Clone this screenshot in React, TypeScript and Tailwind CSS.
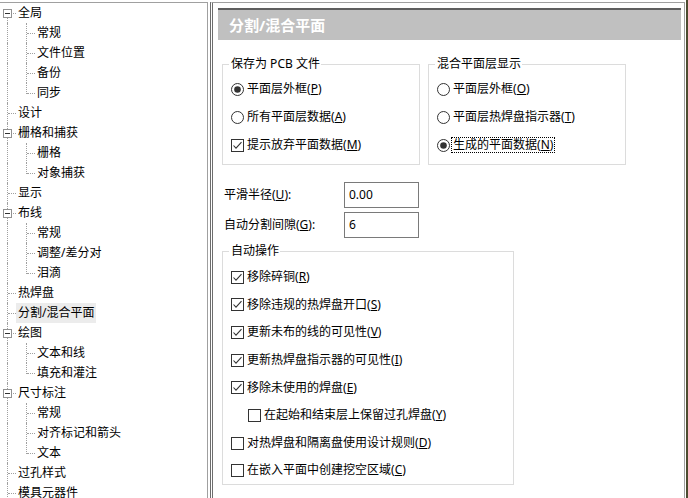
import React from 'react';

type TreeItem = { t: string; l: 0 | 1; exp?: boolean; first?: boolean; last?: boolean; sel?: boolean };

const tree: TreeItem[] = [
  { t: '全局', l: 0, exp: true, first: true },
  { t: '常规', l: 1 },
  { t: '文件位置', l: 1 },
  { t: '备份', l: 1 },
  { t: '同步', l: 1, last: true },
  { t: '设计', l: 0 },
  { t: '栅格和捕获', l: 0, exp: true },
  { t: '栅格', l: 1 },
  { t: '对象捕获', l: 1, last: true },
  { t: '显示', l: 0 },
  { t: '布线', l: 0, exp: true },
  { t: '常规', l: 1 },
  { t: '调整/差分对', l: 1 },
  { t: '泪滴', l: 1, last: true },
  { t: '热焊盘', l: 0 },
  { t: '分割/混合平面', l: 0, sel: true },
  { t: '绘图', l: 0, exp: true },
  { t: '文本和线', l: 1 },
  { t: '填充和灌注', l: 1, last: true },
  { t: '尺寸标注', l: 0, exp: true },
  { t: '常规', l: 1 },
  { t: '对齐标记和箭头', l: 1 },
  { t: '文本', l: 1, last: true },
  { t: '过孔样式', l: 0 },
  { t: '模具元器件', l: 0 },
];

function TreeRow({ item }: { item: TreeItem }) {
  return (
    <div className="flex h-[20px] shrink-0 items-center">
      {item.l === 0 ? (
        <div className="relative h-full w-[16px] shrink-0">
          <span
            className={`absolute left-[7px] border-l border-dotted border-[#a0a0a0] ${
              item.first ? 'top-[10px] h-[10px]' : 'top-0 h-full'
            }`}
          />
          <span className="absolute left-[8px] top-[10px] w-[8px] border-t border-dotted border-[#a0a0a0]" />
          {item.exp && (
            <span className="absolute left-[3px] top-[6px] flex h-[9px] w-[9px] items-center justify-center border border-[#919191] bg-white">
              <span className="h-px w-[5px] bg-[#333]" />
            </span>
          )}
        </div>
      ) : (
        <div className="relative h-full w-[35px] shrink-0">
          <span className="absolute left-[7px] top-0 h-full border-l border-dotted border-[#a0a0a0]" />
          <span
            className={`absolute left-[26px] top-0 border-l border-dotted border-[#a0a0a0] ${
              item.last ? 'h-[11px]' : 'h-full'
            }`}
          />
          <span className="absolute left-[27px] top-[10px] w-[8px] border-t border-dotted border-[#a0a0a0]" />
        </div>
      )}
      <span
        className={`flex h-full items-center whitespace-nowrap px-[2px] text-[12px] leading-[16px] text-black ${
          item.sel ? 'bg-[#ececec]' : ''
        }`}
      >
        {item.t}
      </span>
    </div>
  );
}

function Radio({ on }: { on?: boolean }) {
  return (
    <svg width="13" height="13" viewBox="0 0 13 13" className="shrink-0">
      <circle cx="6.5" cy="6.5" r="6" fill="white" stroke="#333" strokeWidth="1" />
      {on && <circle cx="6.5" cy="6.5" r="3.3" fill="#333" />}
    </svg>
  );
}

function Check({ on }: { on?: boolean }) {
  return (
    <svg width="13" height="13" viewBox="0 0 13 13" className="shrink-0">
      <rect x="0.5" y="0.5" width="12" height="12" fill="white" stroke="#333" strokeWidth="1" />
      {on && <polyline points="2.5,6.5 5,9.2 10.5,3.2" fill="none" stroke="#333" strokeWidth="1.1" />}
    </svg>
  );
}

function Label({ text, k, focus }: { text: string; k: string; focus?: boolean }) {
  return (
    <span
      className={`ml-[1px] whitespace-nowrap border px-[1px] text-[12px] leading-[14px] ${
        focus ? 'border-dotted border-black' : 'border-transparent'
      }`}
    >
      {text}(<u>{k}</u>)
    </span>
  );
}

function GroupBox({ title, width, className, children }: { title: string; width: string; className?: string; children: React.ReactNode }) {
  return (
    <fieldset className={`border border-[#dcdcdc] pl-[6px] ${width} ${className ?? ''}`}>
      <legend className="pl-[2px] pr-[1px] text-[12px] leading-[16px]">{title}</legend>
      <div className="pl-[2px]">{children}</div>
    </fieldset>
  );
}

export default function App() {
  const autoOps: { text: string; k: string; on: boolean; indent?: boolean; h: string }[] = [
    { text: '移除碎铜', k: 'R', on: true, h: 'h-[28px]' },
    { text: '移除违规的热焊盘开口', k: 'S', on: true, h: 'h-[27px]' },
    { text: '更新未布的线的可见性', k: 'V', on: true, h: 'h-[28px]' },
    { text: '更新热焊盘指示器的可见性', k: 'I', on: true, h: 'h-[28px]' },
    { text: '移除未使用的焊盘', k: 'E', on: true, h: 'h-[27px]' },
    { text: '在起始和结束层上保留过孔焊盘', k: 'Y', on: false, indent: true, h: 'h-[28px]' },
    { text: '对热焊盘和隔离盘使用设计规则', k: 'D', on: false, h: 'h-[28px]' },
    { text: '在嵌入平面中创建挖空区域', k: 'C', on: false, h: 'h-[26px]' },
  ];

  return (
    <div className="flex h-[498px] w-[688px] overflow-hidden bg-white font-['Noto_Sans','Noto_Sans_CJK_SC',sans-serif] text-black">
      {/* tree */}
      <div className="mt-[2px] flex w-[208px] shrink-0 flex-col overflow-hidden border-r border-t border-[#a0a0a0]">
        {tree.map((it, i) => (
          <TreeRow key={i} item={it} />
        ))}
      </div>

      {/* page */}
      <div className="ml-[2px] mt-[2px] flex w-[475px] shrink-0 flex-col border-l-[3px] border-r border-t border-double border-l-[#6d6d6d] border-r-[#a0a0a0] border-t-[#a0a0a0] pl-[5px] pr-[3px] pt-[5px]">
        <div className="flex h-[32px] shrink-0 items-center border-t-2 border-[#5f5f5f] bg-[#c0c0c0] pl-[11px] pb-[1px]">
          <span className="text-[15px] font-bold leading-[20px] text-white">分割/混合平面</span>
        </div>

        <div className="flex flex-col pl-[4px]">
          <div className="mt-[16px] flex">
            <GroupBox title="保存为 PCB 文件" width="w-[198px]">
              <div className="flex flex-col pb-[5px] pt-[3px]">
                <div className="flex h-[28px] items-center">
                  <Radio on />
                  <Label text="平面层外框" k="P" />
                </div>
                <div className="flex h-[28px] items-center">
                  <Radio />
                  <Label text="所有平面层数据" k="A" />
                </div>
                <div className="flex h-[28px] items-center">
                  <Check on />
                  <Label text="提示放弃平面数据" k="M" />
                </div>
              </div>
            </GroupBox>
            <GroupBox title="混合平面层显示" width="w-[198px]" className="ml-[8px]">
              <div className="flex flex-col pb-[5px] pt-[3px]">
                <div className="flex h-[28px] items-center">
                  <Radio />
                  <Label text="平面层外框" k="O" />
                </div>
                <div className="flex h-[28px] items-center">
                  <Radio />
                  <Label text="平面层热焊盘指示器" k="T" />
                </div>
                <div className="flex h-[28px] items-center">
                  <Radio on />
                  <Label text="生成的平面数据" k="N" focus />
                </div>
              </div>
            </GroupBox>
          </div>

          <div className="mt-[17px] flex flex-col gap-[4px] pl-[2px]">
            <div className="flex h-[26px] items-center">
              <span className="w-[120px] text-[12px] leading-[16px]">
                平滑半径(<u>U</u>):
              </span>
              <div className="flex h-[26px] w-[75px] items-center border border-[#7a7a7a] pl-[4px] text-[12px]">0.00</div>
            </div>
            <div className="flex h-[26px] items-center">
              <span className="w-[120px] text-[12px] leading-[16px]">
                自动分割间隙(<u>G</u>):
              </span>
              <div className="flex h-[26px] w-[75px] items-center border border-[#7a7a7a] pl-[4px] text-[12px]">6</div>
            </div>
          </div>

          <GroupBox title="自动操作" width="w-[292px]" className="mt-[5px]">
            <div className="flex flex-col pb-[1px] pt-[4px]">
              {autoOps.map((o) => (
                <div key={o.k} className={`flex items-center ${o.h} ${o.indent ? 'pl-[17px]' : ''}`}>
                  <Check on={o.on} />
                  <Label text={o.text} k={o.k} />
                </div>
              ))}
            </div>
          </GroupBox>
        </div>
      </div>

      <div className="ml-[1px] w-[2px] shrink-0 bg-[#4c4c30]" />
    </div>
  );
}
